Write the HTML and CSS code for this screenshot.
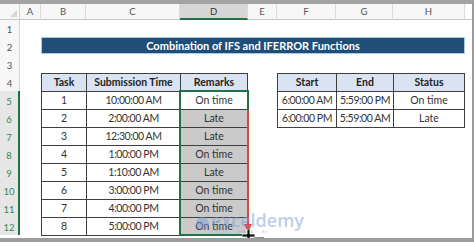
FILE: index.html
```html
<!DOCTYPE html>
<html lang="en">
<head>
    <meta charset="utf-8" />
    <title>Combination of IFS and IFERROR Functions</title>
    <link rel="stylesheet" href="styles.css">
</head>
<body>
    <div class="window">
        <div class="sheet">
            <div class="corner"></div>
            <div class="colHead">A</div>
            <div class="colHead">B</div>
            <div class="colHead">C</div>
            <div class="colHead sel">D</div>
            <div class="colHead">E</div>
            <div class="colHead">F</div>
            <div class="colHead">G</div>
            <div class="colHead">H</div>
            <div class="colHead last"></div>

            <div class="rowHead r1">1</div>
            <div class="rowHead r2">2</div>
            <div class="rowHead r3">3</div>
            <div class="rowHead r4">4</div>
            <div class="rowHead r5 sel">5</div>
            <div class="rowHead r6 sel">6</div>
            <div class="rowHead r7 sel">7</div>
            <div class="rowHead r8 sel">8</div>
            <div class="rowHead r9 sel">9</div>
            <div class="rowHead r10 sel">10</div>
            <div class="rowHead r11 sel">11</div>
            <div class="rowHead r12 sel">12</div>

            <div class="title">Combination of IFS and IFERROR Functions</div>

            <table class="tbl tasks">
                <tr><th class="cTask">Task</th><th class="cTime">Submission Time</th><th>Remarks</th></tr>
                <tr><td>1</td><td class="time">10:00:00 AM</td><td>On time</td></tr>
                <tr><td>2</td><td class="time">2:00:00 AM</td><td class="grey">Late</td></tr>
                <tr><td>3</td><td class="time">12:30:00 AM</td><td class="grey">Late</td></tr>
                <tr><td>4</td><td class="time">1:00:00 PM</td><td class="grey">On time</td></tr>
                <tr><td>5</td><td class="time">1:10:00 AM</td><td class="grey">Late</td></tr>
                <tr><td>6</td><td class="time">3:00:00 PM</td><td class="grey">On time</td></tr>
                <tr><td>7</td><td class="time">4:00:00 PM</td><td class="grey">On time</td></tr>
                <tr><td>8</td><td class="time">5:00:00 PM</td><td class="grey">On time</td></tr>
            </table>

            <div class="selection"></div>

            <table class="tbl shifts">
                <tr><th class="cStart">Start</th><th class="cEnd">End</th><th>Status</th></tr>
                <tr><td class="time">6:00:00 AM</td><td class="time">5:59:00 PM</td><td>On time</td></tr>
                <tr><td class="time">6:00:00 PM</td><td class="time">5:59:00 AM</td><td>Late</td></tr>
            </table>
        </div>

        <svg class="arrow" width="10" height="126" viewBox="0 0 10 126">
            <line x1="5" y1="0" x2="5" y2="118" stroke="#e0463c" stroke-width="2" />
            <polygon points="1,114 9,114 5,122" fill="#e0463c" />
        </svg>

        <div class="quick"></div>
        <svg class="cursor" width="13" height="13" viewBox="0 0 13 13">
            <path d="M5 0h3v5h5v3H8v5H5V8H0V5h5z" fill="#111" stroke="#fff" stroke-width="0.8" />
        </svg>

        <div class="mark">
            <span class="markLogo"></span>
            <span class="markText">exceldemy<small>EXCEL · DATA · BI</small></span>
        </div>
    </div>
</body>
</html>
```

FILE: styles.css
```css
body {
    margin: 0;
    padding: 0;
    background: #fff;
}

.window {
    position: relative;
    width: 472px;
    height: 234px;
    border-top: 4px solid #a3a3a3;
    border-right: 2px solid #9c9c9c;
    border-bottom: 4px solid #9c9c9c;
    background: #fff;
    overflow: hidden;
    font-family: Lato, "Open Sans", sans-serif;
    color: #262626;
}

.sheet {
    display: grid;
    grid-template-columns: 20px 21px 45px 94px 68px 29px 59px 57px 72px 7px;
    grid-template-rows: 16px 17px 18px 18px repeat(9, 18px);
}

.corner {
    background: #f7f7f7;
    border-right: 1px solid #d4d4d4;
    border-bottom: 1px solid #c8c8c8;
    position: relative;
}
.corner::after {
    content: "";
    position: absolute;
    right: 2px;
    bottom: 2px;
    border-left: 7px solid transparent;
    border-bottom: 7px solid #d6d6d6;
}

.colHead {
    background: #f7f7f7;
    border-right: 1px solid #dadada;
    border-bottom: 1px solid #c8c8c8;
    font-size: 9.5px;
    color: #555;
    display: flex;
    align-items: center;
    justify-content: center;
}
.colHead.sel {
    background: #d6d6d6;
    border-bottom: 2px solid #217346;
    color: #333;
}
.colHead.last {
    background: #fff;
    border-right: none;
}

.rowHead {
    grid-column: 1;
    background: #f7f7f7;
    border-right: 1px solid #d4d4d4;
    font-size: 9.5px;
    color: #555;
    display: flex;
    align-items: center;
    justify-content: center;
    padding-top: 2px;
}
.rowHead.sel {
    background: #e6e6e6;
    color: #2f8a56;
    border-right: 2px solid #217346;
}
.r1 { grid-row: 2; }
.r2 { grid-row: 3; }
.r3 { grid-row: 4; }
.r4 { grid-row: 5; }
.r5 { grid-row: 6; }
.r6 { grid-row: 7; }
.r7 { grid-row: 8; }
.r8 { grid-row: 9; }
.r9 { grid-row: 10; }
.r10 { grid-row: 11; }
.r11 { grid-row: 12; }
.r12 { grid-row: 13; }

.title {
    grid-column: 3 / 10;
    grid-row: 3;
    height: 17px;
    background: #1f4e79;
    border: 1px solid #a9cbe9;
    box-sizing: border-box;
    color: #fff;
    font-weight: 700;
    font-size: 11px;
    display: flex;
    align-items: center;
    justify-content: center;
}

.tbl {
    border-collapse: collapse;
    width: 100%;
    font-size: 10.5px;
    text-align: center;
}
.tbl th,
.tbl td {
    border: 1px solid #3f3f3f;
    height: 17px;
    padding: 0;
    line-height: 17px;
}
.tbl th {
    background: #dae3f1;
    font-weight: 700;
    color: #222;
}
.tbl td {
    color: #333;
}
.tbl td.time {
    font-size: 10.5px;
    letter-spacing: -0.45px;
}
.tbl td.grey {
    background: #cacaca;
}

.tasks {
    grid-column: 3 / 6;
    grid-row: 5 / 14;
}
.cTask { width: 44px; }
.cTime { width: 93px; }

.shifts {
    grid-column: 7 / 10;
    grid-row: 5 / 8;
    align-self: start;
}
.cStart { width: 58px; }
.cEnd { width: 56px; }

.selection {
    grid-column: 5;
    grid-row: 6 / 14;
    border: 2px solid #217346;
    margin: -1px;
    z-index: 1;
    pointer-events: none;
}

.arrow {
    position: absolute;
    left: 243px;
    top: 106px;
    z-index: 2;
}

.cursor {
    position: absolute;
    left: 242px;
    top: 225px;
    z-index: 4;
}

.quick {
    position: absolute;
    left: 254px;
    top: 233px;
    width: 8px;
    height: 5px;
    border: 1px solid #8a8a8a;
    background: #fff;
    box-shadow: inset 3px 2px 0 #2d5fb0;
    z-index: 3;
}

.mark {
    position: absolute;
    left: 196px;
    top: 207px;
    display: flex;
    align-items: center;
    gap: 2px;
    opacity: 0.5;
    z-index: 2;
}
.markLogo {
    width: 13px;
    height: 13px;
    border-radius: 50%;
    background: #7d9cd6;
    margin-top: 2px;
}
.markText {
    font: 600 18px "Open Sans", sans-serif;
    color: #7f9cd8;
    line-height: 18px;
    display: flex;
    flex-direction: column;
}
.markText small {
    font-size: 4px;
    line-height: 5px;
    letter-spacing: 1.5px;
    color: #8a9dc2;
}
```
